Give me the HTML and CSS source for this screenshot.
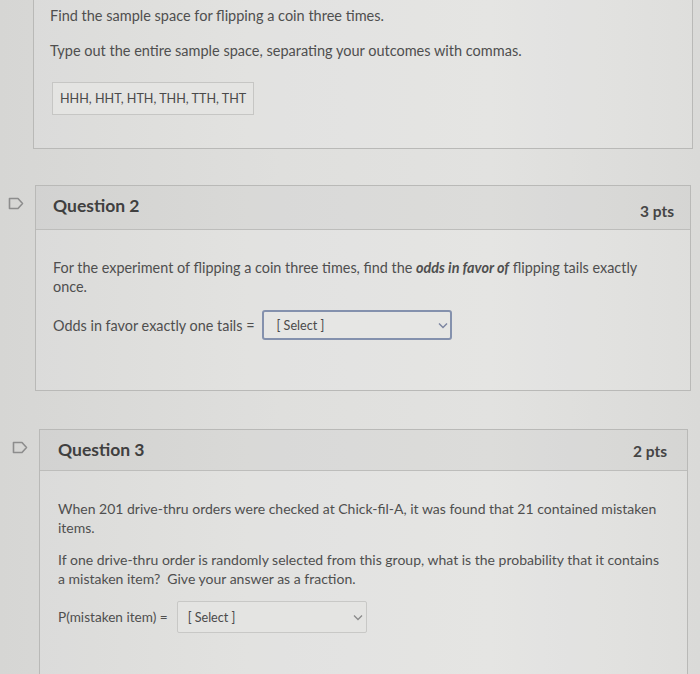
FILE: index.html
```html
<!DOCTYPE html>
<html>
<head>
<meta charset="utf-8">
<link rel="stylesheet" href="styles.css">
</head>
<body>
<div class="page">
  <div class="row row-1">
    <div class="card card-1">
      <div class="body body-1">
        <p class="p1">Find the sample space for flipping a coin three times.</p>
        <p class="p2">Type out the entire sample space, separating your outcomes with commas.</p>
        <div class="answer">HHH, HHT, HTH, THH, TTH, THT</div>
      </div>
    </div>
  </div>

  <div class="row row-2">
    <div class="flag">
      <svg width="16" height="13" viewBox="0 0 16 13"><path d="M1.5 1.5 H10 L14.5 6.5 L10 11.5 H1.5 Z" fill="none" stroke="#8d8d8d" stroke-width="1.6" stroke-linejoin="round"/></svg>
    </div>
    <div class="card card-2">
      <div class="head head-2">
        <span class="title">Question 2</span>
        <span class="pts pts-2">3 pts</span>
      </div>
      <div class="body body-2">
        <p class="text">For the experiment of flipping a coin three times, find the <b><i>odds in favor of</i></b> flipping tails exactly once.</p>
        <p class="text ans-line">Odds in favor exactly one tails = <span class="select select-focus">[ Select ]<span class="chev"><svg width="10" height="7" viewBox="0 0 10 7"><path d="M1 1.5 L5 5.5 L9 1.5" fill="none" stroke="#7b84a0" stroke-width="1.4"/></svg></span></span></p>
      </div>
    </div>
  </div>

  <div class="row row-3">
    <div class="flag">
      <svg width="16" height="13" viewBox="0 0 16 13"><path d="M1.5 1.5 H10 L14.5 6.5 L10 11.5 H1.5 Z" fill="none" stroke="#8d8d8d" stroke-width="1.6" stroke-linejoin="round"/></svg>
    </div>
    <div class="card card-3">
      <div class="head head-3">
        <span class="title">Question 3</span>
        <span class="pts pts-3">2 pts</span>
      </div>
      <div class="body body-3">
        <p class="text">When 201 drive-thru orders were checked at Chick-fil-A, it was found that 21 contained mistaken items.</p>
        <p class="text">If one drive-thru order is randomly selected from this group, what is the probability that it contains a mistaken item?&nbsp; Give your answer as a fraction.</p>
        <p class="text ans-line small">P(mistaken item) = <span class="select select-plain">[ Select ]<span class="chev"><svg width="10" height="7" viewBox="0 0 10 7"><path d="M1 1.5 L5 5.5 L9 1.5" fill="none" stroke="#8a8a8a" stroke-width="1.3"/></svg></span></span></p>
      </div>
    </div>
  </div>
</div>
</body>
</html>
```

FILE: styles.css
```css
html, body {
  margin: 0;
  padding: 0;
}
body {
  width: 700px;
  height: 674px;
  overflow: hidden;
  background: linear-gradient(90deg, #d6d6d4 0%, #dfdfdd 40%, #e2e2e0 70%, #dadad8 100%);
  font-family: Lato, "Open Sans", sans-serif;
  color: #4f4f4f;
}
.page {
  display: flex;
  flex-direction: column;
}
.row {
  display: flex;
  align-items: flex-start;
}
.flag {
  width: 16px;
  height: 13px;
  line-height: 0;
}
.card {
  border: 1px solid #b9b9b7;
  background: rgba(255, 255, 255, 0.12);
  box-sizing: border-box;
}
.row-1 { padding-left: 33px; }
.card-1 {
  width: 660px;
  border-top: none;
  height: 149px;
}
.row-2 { padding-left: 8px; margin-top: 36px; }
.row-2 .flag { margin-top: 12px; margin-right: 11px; }
.card-2 {
  width: 656px;
  height: 206px;
}
.row-3 { padding-left: 12px; margin-top: 38px; }
.row-3 .flag { margin-top: 12px; margin-right: 11px; }
.card-3 {
  width: 649px;
  height: 260px;
}
.body-1 {
  padding: 6px 0 0 16px;
}
.body-1 p { margin: 0; font-size: 14.5px; }
.p1 { line-height: 20px; }
.p2 { margin-top: 15px !important; line-height: 20px; }
.answer {
  margin-top: 21px;
  margin-left: 2px;
  width: 202px;
  height: 33px;
  box-sizing: border-box;
  border: 1px solid #c6c6c4;
  background: #e4e4e2;
  font-size: 12.6px;
  line-height: 31px;
  padding-left: 7px;
  color: #4a4a4a;
}
.head {
  display: flex;
  justify-content: space-between;
  align-items: flex-start;
  background: rgba(0, 0, 0, 0.04);
  border-bottom: 1px solid #bdbdbb;
  box-sizing: border-box;
}
.head-2 { height: 44px; padding: 8px 16px 0 17px; }
.head-3 { height: 41px; padding: 8px 20px 0 18px; }
.title {
  font-weight: 700;
  font-size: 17.5px;
  color: #404040;
  line-height: 23px;
}
.pts {
  font-weight: 700;
  font-size: 15.5px;
  color: #454545;
  line-height: 20px;
}
.pts-2 { margin-top: 7px; }
.pts-3 { margin-top: 3px; }
.body-2 { padding: 28px 40px 0 17px; }
.body-3 { padding: 28px 24px 0 18px; }
.text {
  margin: 0 0 13px 0;
  font-size: 14.4px;
  line-height: 19px;
}
.body-3 .text { font-size: 14px; }
.ans-line {
  display: flex;
  align-items: center;
  margin-top: 14px;
}
.body-3 .ans-line { margin-top: 13px; }
.body-3 .small { font-size: 13.6px; }
.select {
  display: inline-flex;
  align-items: center;
  justify-content: space-between;
  box-sizing: border-box;
  font-size: 12.6px;
  color: #4a4a4a;
}
.select-focus {
  width: 190px;
  height: 30px;
  border: 2px solid #8491ad;
  border-radius: 3px;
  padding: 0 2px 0 13px;
  background: #e6e6e4;
  margin-left: 7px;
}
.select-plain {
  width: 190px;
  height: 32px;
  border: 1px solid #c8c8c6;
  border-radius: 2px;
  padding: 0 3px 0 10px;
  background: #e4e4e2;
  margin-left: 9px;
}
.chev {
  line-height: 0;
}
```
